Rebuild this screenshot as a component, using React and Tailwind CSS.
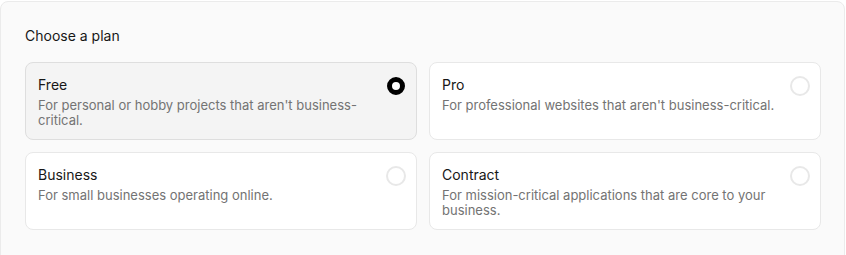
import React, { useState } from 'react';

const plans = [
    { id: 'free', name: 'Free', desc: "For personal or hobby projects that aren't business-critical." },
    { id: 'pro', name: 'Pro', desc: "For professional websites that aren't business-critical." },
    { id: 'business', name: 'Business', desc: 'For small businesses operating online.' },
    { id: 'contract', name: 'Contract', desc: 'For mission-critical applications that are core to your business.' },
];

const Radio = ({ checked }) => (
    <span className="flex h-5 w-5 shrink-0 items-center justify-center">
        {checked ? (
            <span className="block h-[18px] w-[18px] rounded-full border-[5px] border-black bg-white" />
        ) : (
            <span className="block h-5 w-5 rounded-full border-2 border-[#e8e8e8] bg-white" />
        )}
    </span>
);

const App = () => {
    const [selected, setSelected] = useState('free');

    return (
        <div className="h-[255px] w-full overflow-hidden bg-white pt-px" style={{ fontFamily: 'Inter, "Liberation Sans", sans-serif' }}>
            <div className="h-[270px] w-[845px] rounded-lg border border-[#ebebeb] bg-[#fafafa] pl-6 pr-[23px] pt-6">
                <h2 className="text-sm leading-5 text-[#171717]">Choose a plan</h2>
                <div className="mt-4 grid grid-cols-2 gap-3">
                    {plans.map((p) => {
                        const active = selected === p.id;
                        return (
                            <button
                                key={p.id}
                                type="button"
                                onClick={() => setSelected(p.id)}
                                className={
                                    active
                                        ? 'flex h-[78px] items-start gap-3 rounded-lg border border-[#dedede] bg-[#f4f4f4] pl-3 pr-3 pt-3 text-left'
                                        : 'flex h-[78px] items-start gap-3 rounded-lg border border-[#e8e8e8] bg-white pl-3 pr-3 pt-3 text-left'
                                }
                            >
                                <div className="flex-1">
                                    <div className="text-sm leading-5 text-[#171717]">{p.name}</div>
                                    <div className="mt-[3px] text-[13px] leading-[15px] text-[#737373]">{p.desc}</div>
                                </div>
                                <span className="-mr-[2px] mt-[1px]">
                                    <Radio checked={active} />
                                </span>
                            </button>
                        );
                    })}
                </div>
            </div>
        </div>
    );
};

export default App;
